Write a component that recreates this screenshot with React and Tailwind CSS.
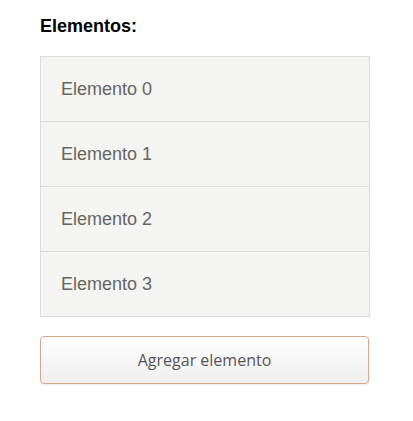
import { useState } from "react";

export default function App() {
  const [items, setItems] = useState([0, 1, 2, 3]);

  return (
    <div className="min-h-screen bg-white px-10 pt-[15px] font-['Liberation_Sans',Arial,sans-serif]">
      <div className="w-[330px]">
        <h2 className="text-[18px] font-bold leading-[22px] text-black">Elementos:</h2>
        <ul className="mt-[19px] border border-[#dcdcda] bg-[#f4f4f2]">
          {items.map((n, i) => (
            <li
              key={n}
              className={`box-content flex h-[64px] items-center px-5 text-[18px] text-[#666661] ${
                i > 0 ? "border-t border-[#dcdcda]" : ""
              }`}
            >
              Elemento {n}
            </li>
          ))}
        </ul>
        <button
          onClick={() => setItems((v) => [...v, v.length])}
          className="mt-[19px] h-[48px] w-[329px] rounded-[4px] border border-[#d9a58f] bg-gradient-to-b from-white to-[#efefef] text-[16px] text-[#555] shadow-[0_1px_2px_rgba(0,0,0,0.08)] font-['Open_Sans','Noto_Sans',sans-serif]"
        >
          Agregar elemento
        </button>
      </div>
    </div>
  );
}
